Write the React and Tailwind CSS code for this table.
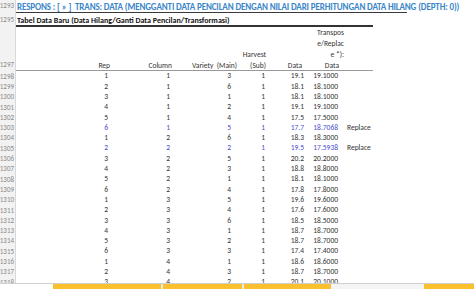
const font = { fontFamily: "Carlito, Calibri, 'Open Sans', sans-serif" };

const rows = [
  [298, 1, 1, 3, 1, "19.1", "19.1000"],
  [299, 2, 1, 6, 1, "18.1", "18.1000"],
  [300, 3, 1, 1, 1, "18.1", "18.1000"],
  [301, 4, 1, 2, 1, "19.1", "19.1000"],
  [302, 5, 1, 4, 1, "17.5", "17.5000"],
  [303, 6, 1, 5, 1, "17.7", "18.7068", "Replace"],
  [304, 1, 2, 6, 1, "18.3", "18.3000"],
  [305, 2, 2, 2, 1, "19.5", "17.5938", "Replace"],
  [306, 3, 2, 5, 1, "20.2", "20.2000"],
  [307, 4, 2, 3, 1, "18.8", "18.8000"],
  [308, 5, 2, 1, 1, "18.1", "18.1000"],
  [309, 6, 2, 4, 1, "17.8", "17.8000"],
  [310, 1, 3, 5, 1, "19.6", "19.6000"],
  [311, 2, 3, 4, 1, "17.6", "17.6000"],
  [312, 3, 3, 6, 1, "18.5", "18.5000"],
  [313, 4, 3, 1, 1, "18.7", "18.7000"],
  [314, 5, 3, 2, 1, "18.7", "18.7000"],
  [315, 6, 3, 3, 1, "17.4", "17.4000"],
  [316, 1, 4, 1, 1, "18.6", "18.6000"],
  [317, 2, 4, 3, 1, "18.7", "18.7000"],
  [318, 3, 4, 2, 1, "20.1", "20.1000"],
];

function RowNum({ n }) {
  return (
    <div className="w-[16px] h-full shrink-0 flex justify-end items-center overflow-hidden bg-[#f2f2f2] border-r border-[#d9d9d9] pr-[1px] text-[7px] text-[#8a8a8a] whitespace-nowrap">
      {n ? "1" + n : ""}
    </div>
  );
}

export default function App() {
  return (
    <div className="w-[474px] h-[289px] overflow-hidden bg-white flex flex-col" style={font}>
      <div className="h-[283px] overflow-hidden flex flex-col shrink-0">
        {/* title */}
        <div className="h-[13px] flex items-center shrink-0">
          <RowNum n={293} />
          <div className="relative flex-1 h-full flex items-center pl-[1px] whitespace-nowrap text-[9px] tracking-[-0.12px] font-bold text-[#3a86c8]">
            RESPONS : [ » ]&nbsp; TRANS: DATA (MENGGANTI DATA PENCILAN DENGAN NILAI DARI PERHITUNGAN DATA HILANG (DEPTH: 0))
            <div className="absolute left-0 bottom-0 w-[391px] h-[1px] bg-[#3a3a3a]" />
          </div>
        </div>

        {/* subtitle */}
        <div className="h-[14px] flex items-center shrink-0">
          <RowNum n={295} />
          <div className="relative flex-1 h-full flex items-center pl-[1px] whitespace-nowrap text-[8px] font-bold text-[#111]">
            Tabel Data Baru (Data Hilang/Ganti Data Pencilan/Transformasi)
            <div className="absolute left-0 bottom-0 w-[357px] h-[2px] bg-[#333]" />
          </div>
        </div>

        {/* header */}
        <div className="h-[44px] flex shrink-0">
          <div className="w-[16px] h-full shrink-0 bg-[#f2f2f2] border-r border-[#d9d9d9] flex justify-end items-end overflow-hidden pr-[1px] pb-[1px] text-[7px] text-[#8a8a8a]">
            1297
          </div>
          <div className="relative flex items-end text-[7.5px] leading-[11px] text-[#333] text-right">
            <div className="w-[95px] pr-[1px]">Rep</div>
            <div className="w-[62px] pr-[1px]">Column</div>
            <div className="w-[65px] pr-[1px] whitespace-nowrap">Variety&nbsp; (Main)</div>
            <div className="w-[29px] pr-[1px]">Harvest<br />(Sub)</div>
            <div className="w-[38px] pr-[3px]">Data</div>
            <div className="w-[40px] pr-[1px]">Transpos<br />e/Replac<br />e *):<br /><span className="pr-[5px]">Data</span></div>
            <div className="w-[28px]" />
            <div className="absolute left-0 bottom-0 w-[357px] h-[1px] bg-[#9a9a9a]" />
          </div>
        </div>

        {/* data rows */}
        {rows.map((r) => {
          const blue = !!r[7];
          const c = blue ? "text-[#4a4ad0]" : "text-[#333]";
          return (
            <div key={r[0]} className="h-[10.3px] flex items-center shrink-0 text-[7.5px] leading-none">
              <RowNum n={r[0]} />
              <div className={`w-[95px] text-right pr-[3px] ${c}`}>{r[1]}</div>
              <div className={`w-[62px] text-right pr-[3px] ${c}`}>{r[2]}</div>
              <div className={`w-[65px] text-right pr-[7px] ${c}`}>{r[3]}</div>
              <div className={`w-[29px] text-right pr-[2px] ${c}`}>{r[4]}</div>
              <div className={`w-[38px] text-right pr-[1px] ${c}`}>{r[5]}</div>
              <div className={`w-[40px] text-right pr-[7px] ${c}`}>{r[6]}</div>
              <div className="pl-[2px] text-[#333]">{r[7] || ""}</div>
            </div>
          );
        })}
      </div>

      {/* sheet tabs */}
      <div className="h-[20px] shrink-0 flex bg-[#e9e9e9] border-t border-[#cfcfcf] text-[8px] text-[#333] whitespace-nowrap">
        <div className="w-[53px] bg-white" />
        <div className="w-[108px] bg-[#fbc02d] pt-[2px] text-center">Acak DATA Terpakai</div>
        <div className="w-[2px]" />
        <div className="w-[79px] bg-[#fbc02d] pt-[2px] text-center">Asli DATA A</div>
        <div className="w-[2px]" />
        <div className="w-[87px] bg-[#fbc02d] pt-[2px] text-center">Hasil DATA Baru</div>
        <div className="w-[93px] bg-[#f4f4f4] pt-[2px] text-center text-[#217346]">Anal. Split Plot A</div>
        <div className="flex-1 bg-[#fbc02d] pt-[2px] pl-[6px]">Lab Data</div>
      </div>
    </div>
  );
}
